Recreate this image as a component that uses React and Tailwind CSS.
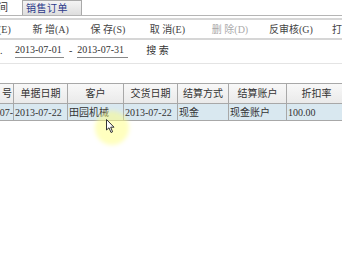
export default function App() {
  const font = { fontFamily: '"Liberation Serif", "Noto Sans CJK SC", serif' };
  const cols = [
    { w: 14, h: "号", d: "07-", align: "justify-start" },
    { w: 54, h: "单据日期", d: "2013-07-22" },
    { w: 56, h: "客户", d: "田园机械" },
    { w: 54, h: "交货日期", d: "2013-07-22" },
    { w: 51, h: "结算方式", d: "现金" },
    { w: 58, h: "结算账户", d: "现金账户" },
    { w: 60, h: "折扣率", d: "100.00" },
  ];
  return (
    <div className="relative w-[342px] h-[255px] bg-white overflow-hidden text-[10px] text-[#333]" style={font}>
      {/* tab bar */}
      <div className="flex h-[16px] border-b border-[#b5b5b5] items-end">
        <div className="w-[22px] h-full flex items-center pl-0 text-[#333] overflow-hidden whitespace-nowrap">
          <span className="-ml-[2px]">间</span>
        </div>
        <div className="w-[60px] h-[15px] bg-gradient-to-b from-[#f4f4f4] to-[#dedede] border border-b-0 border-[#a9a9a9] flex items-center pl-[3px] text-[#2b3a8a] tracking-[0.5px]">
          销售订单
        </div>
      </div>
      {/* toolbar */}
      <div className="mt-[2px] h-[22px] border-t-2 border-b-2 border-[#d6d6d6] flex items-center text-[#444] whitespace-nowrap">
        <span className="-ml-[2px] w-[35px]">(E)</span>
        <span className="w-[59px]">新 增(A)</span>
        <span className="w-[60px]">保 存(S)</span>
        <span className="w-[63px]">取 消(E)</span>
        <span className="w-[58px] text-[#aaa]">删 除(D)</span>
        <span className="w-[64px]">反审核(G)</span>
        <span>打</span>
      </div>
      {/* date row */}
      <div className="h-[21px] flex items-center whitespace-nowrap">
        <span className="w-[15px]">.</span>
        <span className="border-b border-[#888] leading-[13px] pb-[1px] w-[49px]">2013-07-01</span>
        <span className="mx-[5px]">-</span>
        <span className="border-b border-[#888] leading-[13px] pb-[1px] w-[51px]">2013-07-31</span>
        <span className="ml-[18px]">搜 索</span>
      </div>
      <div className="mt-[2px] h-px bg-[#e4e4e4]" />
      {/* table */}
      <div className="mt-[19px] flex flex-col">
        <div className="flex h-[21px] border-t border-b border-[#a8a8a8] bg-gradient-to-b from-[#f8f8f8] to-[#eaeaea]">
          {cols.map((c, i) => (
            <div
              key={i}
              style={{ width: c.w }}
              className={`shrink-0 flex items-center overflow-hidden whitespace-nowrap border-r border-[#a8a8a8] ${i === 0 ? "justify-end pr-[1px]" : "justify-center"}`}
            >
              {c.h}
            </div>
          ))}
        </div>
        <div className="flex h-[17px] border-b border-[#a8a8a8] bg-[#d9e8f0]">
          {cols.map((c, i) => (
            <div
              key={i}
              style={{ width: c.w }}
              className={`shrink-0 flex items-center overflow-hidden whitespace-nowrap border-r border-[#a8a8a8] ${i === 0 ? "justify-end" : "pl-[1px]"}`}
            >
              {c.d}
            </div>
          ))}
        </div>
      </div>
      {/* cursor highlight */}
      <div className="absolute left-[95px] top-[111px] w-[34px] h-[34px] rounded-full bg-[#ffff80] opacity-50 blur-[2px]" />
      <svg className="absolute left-[106px] top-[119px]" width="10" height="15" viewBox="0 0 10 15">
        <path d="M0.5 0.5 L0.5 11 L3 8.8 L5 13.5 L6.6 12.8 L4.7 8.2 L8 8.2 Z" fill="white" stroke="#333" strokeWidth="1" />
      </svg>
    </div>
  );
}
